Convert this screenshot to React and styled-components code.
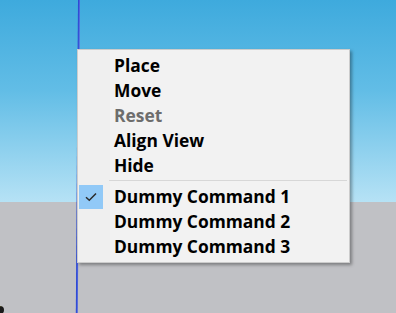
import React from 'react';
import styled, { createGlobalStyle } from 'styled-components';

const Global = createGlobalStyle`
  html, body {
    margin: 0;
    padding: 0;
  }
  body {
    font-family: "Open Sans", "Noto Sans", sans-serif;
  }
`

const Scene = styled.div`
  position: relative;
  width: 396px;
  height: 313px;
  overflow: hidden;
  display: flex;
  flex-direction: column;
`

const Sky = styled.div`
  height: 202px;
  background: linear-gradient(to bottom, #3eaadd 0%, #62bde6 45%, #b6e2f5 100%);
`

const Ground = styled.div`
  flex: 1;
  background-color: #c0c1c5;
`

const Axis = styled.div`
  position: absolute;
  left: 78px;
  top: 0;
  width: 2px;
  height: 313px;
  background: linear-gradient(to right, #1f3fd0, #5a6ce0);
  transform: skewX(-0.4deg);
  transform-origin: top;
`

const Corner = styled.div`
  position: absolute;
  left: -4px;
  top: 306px;
  width: 8px;
  height: 8px;
  border-radius: 50%;
  background: #1a1a1a;
  box-shadow: 2px 0 0 #d6c200 inset;
`

const Menu = styled.ul`
  position: absolute;
  left: 77px;
  top: 49px;
  width: 271px;
  margin: 0;
  padding: 3px 0 3px;
  list-style: none;
  background: linear-gradient(to right, #efefef 0, #efefef 32px, #f2f2f2 32px);
  border: 1px solid #cccccc;
  box-shadow: 2px 2px 3px rgba(0, 0, 0, 0.35);
`

const Item = styled.li`
  display: flex;
  align-items: center;
  height: 25px;
  padding-left: 1px;
  color: ${p => (p.$disabled ? '#6d6d6d' : '#000000')};
  font-size: 17.4px;
  line-height: 25px;
  font-weight: 700;
  white-space: nowrap;
`

const Gutter = styled.span`
  display: flex;
  align-items: center;
  justify-content: center;
  width: 24px;
  height: 24px;
  margin-right: 11px;
  background: ${p => (p.$checked ? '#91c9f7' : 'transparent')};
`

const Separator = styled.li`
  height: 1px;
  margin: 2px 2px 3px 31px;
  background: #d7d7d7;
`

const Check = () => (
  <svg width="12" height="10" viewBox="0 0 12 10">
    <path d="M1 5.2 L4.3 8.3 L11 1.5" fill="none" stroke="#2b2b2b" strokeWidth="1.5" />
  </svg>
)

const top = [
  { label: 'Place' },
  { label: 'Move' },
  { label: 'Reset', disabled: true },
  { label: 'Align View' },
  { label: 'Hide' },
]

const bottom = [
  { label: 'Dummy Command 1', checked: true },
  { label: 'Dummy Command 2' },
  { label: 'Dummy Command 3' },
]

const Row = ({ label, disabled, checked }) => (
  <Item $disabled={disabled}>
    <Gutter $checked={checked}>{checked && <Check />}</Gutter>
    {label}
  </Item>
)

const App = () => (
  <>
    <Global />
    <Scene>
      <Sky />
      <Ground />
      <Axis />
      <Corner />
      <Menu>
        {top.map(i => <Row key={i.label} {...i} />)}
        <Separator />
        {bottom.map(i => <Row key={i.label} {...i} />)}
      </Menu>
    </Scene>
  </>
)

export default App;
